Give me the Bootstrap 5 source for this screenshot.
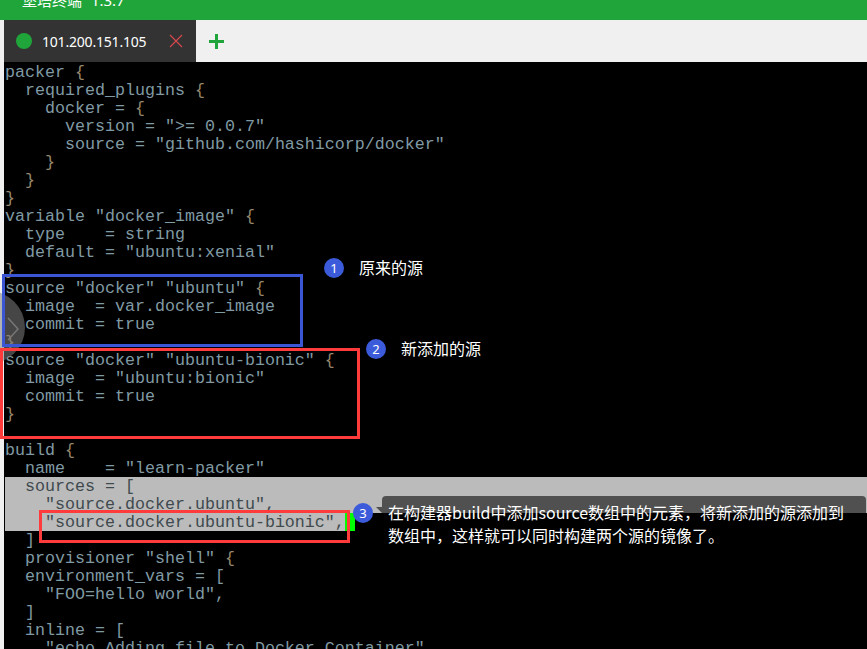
<!DOCTYPE html>
<html lang="zh">
<head>
<meta charset="utf-8">
<title>堡塔终端</title>
<link rel="stylesheet" href="https://cdn.jsdelivr.net/npm/bootstrap@5.3.0/dist/css/bootstrap.min.css">
<style>
html,body{height:649px;overflow:hidden;background:#f0f0f0;}
body{font-family:"Noto Sans","Noto Sans CJK SC",sans-serif;}
.app-root{width:867px;height:649px;position:relative;overflow:hidden;}
.title-strip{height:20px;background:#20a53a;color:#fff;padding-left:22px;font-size:15px;line-height:20px;overflow:hidden;flex:none;}
.title-strip span{display:block;margin-top:-10px;word-spacing:5px;}
.tab-strip{height:42px;background:#f0f0f0;padding-left:4px;flex:none;}
.term-tab{width:192px;background:#333;color:#fff;padding-left:12px;font-size:14px;gap:10px;}
.tab-dot{width:16px;height:16px;border-radius:50%;background:#20a53a;flex:none;}
.tab-ip{width:117px;letter-spacing:-.2px;}
.plus-btn{margin-left:12px;line-height:0;}
.term-wrap{margin-left:4px;background:#000;flex:1;min-height:0;overflow:hidden;padding-top:1px;}
.term-text{margin:0;font-family:"Liberation Mono",monospace;font-size:16.67px;line-height:18px;color:#809aa4;overflow:hidden;padding-left:1px;}
.term-line{display:block;height:18px;padding-top:1px;box-sizing:border-box;white-space:pre;}
.sel-line{background:#bbb;color:#3f4a4e;}
.sel-end{width:350px;}
.brc{color:#97876c;}
.cursor-cell{display:inline-block;width:10px;height:18px;margin-top:-1px;background:#0f0;vertical-align:top;}
.mark-box{position:absolute;border:3px solid #ff3b3b;}
.mark-blue{border-color:#3a56d4;left:2px;top:274px;width:301px;height:73px;}
.mark-red1{left:0;top:348px;width:360px;height:91px;}
.mark-red2{left:39px;top:510px;width:311px;height:33px;}
.step-dot{position:absolute;width:20px;height:20px;border-radius:50%;background:#3b5bdb;color:#fff;font-size:13px;line-height:20px;text-align:center;}
.step-note{position:absolute;color:#fff;font-size:16px;line-height:23px;font-family:"Noto Sans CJK SC","Noto Sans",sans-serif;white-space:nowrap;}
.note-tip{position:absolute;left:382px;top:496px;width:484px;height:17px;background:#505050;border-radius:4px 4px 0 0;}
.tip-arrow{position:absolute;left:376px;top:507px;width:0;height:0;border-style:solid;border-width:0 6px 6px 0;border-color:transparent #505050 transparent transparent;}
.side-handle{position:absolute;left:-48px;top:291px;width:73px;height:73px;border-radius:50%;background:rgba(128,128,128,.55);}
.handle-chev{position:absolute;left:7px;top:317px;line-height:0;}
</style>
</head>
<body>
<div class="app-root d-flex flex-column">
  <div class="title-strip"><span>堡塔终端 1.3.7</span></div>
  <div class="tab-strip d-flex align-items-stretch">
    <div class="term-tab d-flex align-items-center">
      <span class="tab-dot"></span>
      <span class="tab-ip">101.200.151.105</span>
      <svg width="14" height="14" viewBox="0 0 14 14"><path d="M1 1L13 13M13 1L1 13" stroke="#d9484f" stroke-width="1.1" fill="none"/></svg>
    </div>
    <div class="plus-btn d-flex align-items-center">
      <svg width="17" height="17" viewBox="0 0 17 17"><path d="M8.500 1V16M1 8.500H16" stroke="#20a53a" stroke-width="3" fill="none"/></svg>
    </div>
  </div>
  <div class="term-wrap">
<pre class="term-text"><span class="term-line">packer <span class="brc">{</span></span><span class="term-line">  required_plugins <span class="brc">{</span></span><span class="term-line">    docker = <span class="brc">{</span></span><span class="term-line">      version = "&gt;= 0.0.7"</span><span class="term-line">      source = "github.com/hashicorp/docker"</span><span class="term-line">    <span class="brc">}</span></span><span class="term-line">  <span class="brc">}</span></span><span class="term-line"><span class="brc">}</span></span><span class="term-line">variable "docker_image" <span class="brc">{</span></span><span class="term-line">  type    = string</span><span class="term-line">  default = "ubuntu:xenial"</span><span class="term-line"><span class="brc">}</span></span><span class="term-line">source "docker" "ubuntu" <span class="brc">{</span></span><span class="term-line">  image  = var.docker_image</span><span class="term-line">  commit = true</span><span class="term-line"><span class="brc">}</span></span><span class="term-line">source "docker" "ubuntu-bionic" <span class="brc">{</span></span><span class="term-line">  image  = "ubuntu:bionic"</span><span class="term-line">  commit = true</span><span class="term-line"><span class="brc">}</span></span><span class="term-line"> </span><span class="term-line">build <span class="brc">{</span></span><span class="term-line">  name    = "learn-packer"</span><span class="term-line sel-line">  sources = [</span><span class="term-line sel-line">    "source.docker.ubuntu",</span><span class="term-line sel-line sel-end">    "source.docker.ubuntu-bionic",<span class="cursor-cell"></span></span><span class="term-line">  ]</span><span class="term-line">  provisioner "shell" <span class="brc">{</span></span><span class="term-line">  environment_vars = [</span><span class="term-line">    "FOO=hello world",</span><span class="term-line">  ]</span><span class="term-line">  inline = [</span><span class="term-line">    "echo Adding file to Docker Container",</span></pre>
  </div>

  <div class="side-handle"></div>
  <div class="handle-chev"><svg width="12" height="24" viewBox="0 0 12 24"><path d="M1 1L11 12L1 23" stroke="#777" stroke-width="1.500" fill="none"/></svg></div>

  <div class="mark-box mark-blue"></div>
  <div class="mark-box mark-red1"></div>
  <div class="mark-box mark-red2"></div>

  <div class="step-dot" style="left:324px;top:258px">1</div>
  <div class="step-note" style="left:359px;top:256px">原来的源</div>
  <div class="step-dot" style="left:366px;top:339px">2</div>
  <div class="step-note" style="left:401px;top:337px">新添加的源</div>
  <div class="note-tip"></div>
  <div class="tip-arrow"></div>
  <div class="step-dot" style="left:353px;top:503px">3</div>
  <div class="step-note" style="left:388px;top:501px">在构建器build中添加source数组中的元素，将新添加的源添加到<br>数组中，这样就可以同时构建两个源的镜像了。</div>
</div>
<script src="https://cdn.jsdelivr.net/npm/bootstrap@5.3.0/dist/js/bootstrap.bundle.min.js"></script>
</body>
</html>
